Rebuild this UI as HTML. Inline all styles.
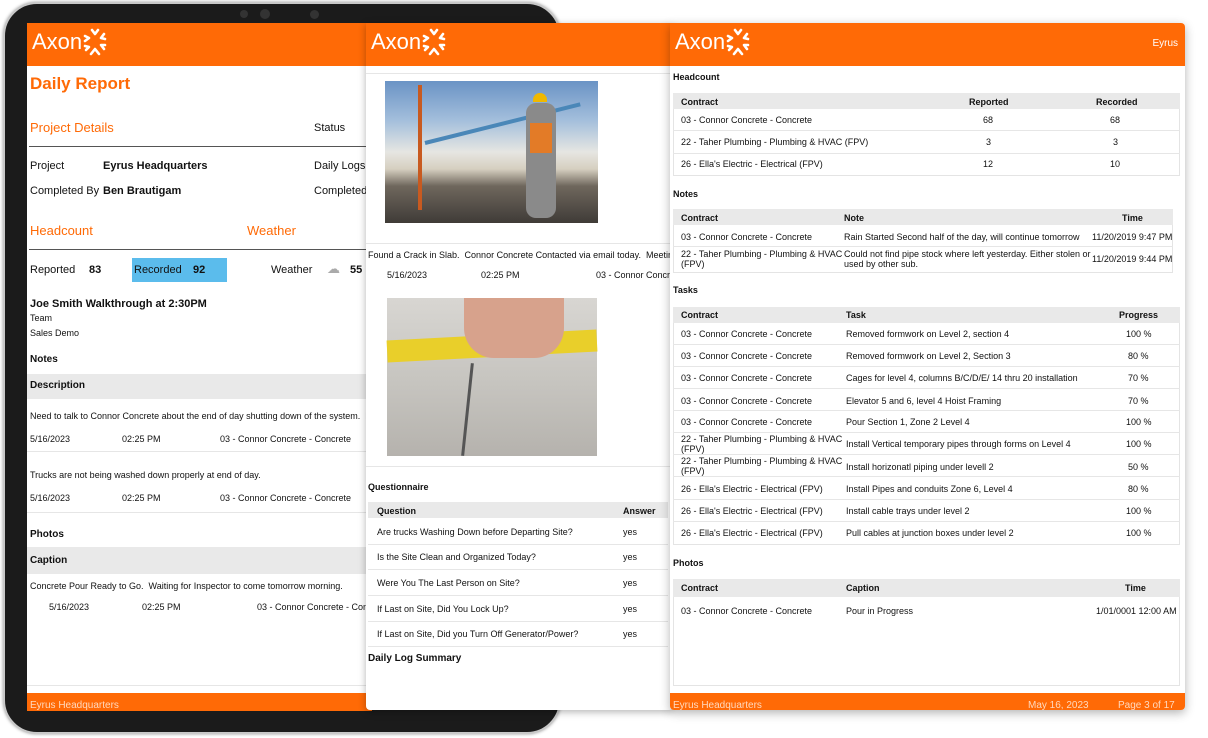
<!DOCTYPE html>
<html><head><meta charset="utf-8"><style>
*{margin:0;padding:0;box-sizing:border-box}
body{width:1208px;height:738px;background:#fff;position:relative;overflow:hidden;font-family:"Liberation Sans",Arial,sans-serif;color:#111}
.a{position:absolute;white-space:nowrap}
.pg{position:absolute;background:#fff;overflow:hidden}
.hd{position:absolute;left:0;right:0;top:0;height:43px;background:#ff6a06}
.logo{position:absolute;top:6px;color:#fff;font-size:22px}
.or{color:#ff6a06}
.s9{font-size:9px}.s10{font-size:10px}.s11{font-size:11px}
.b{font-weight:bold}
.gr{position:absolute;background:#e9e9e9}
.ln{position:absolute;height:1px;background:#e6e6e6}
</style></head><body>

<div style="position:absolute;left:3px;top:2px;width:558px;height:732px;background:#1b1b1b;border-radius:34px;border:2px solid #c8c8c8;box-shadow:0 0 3px #999"></div>
<div class="a" style="left:240px;top:10px;width:8px;height:8px;border-radius:50%;background:#333"></div>
<div class="a" style="left:260px;top:9px;width:10px;height:10px;border-radius:50%;background:#333"></div>
<div class="a" style="left:310px;top:10px;width:9px;height:9px;border-radius:50%;background:#333"></div>

<svg width="0" height="0" style="position:absolute"><defs><g id="burst" stroke="#fff" stroke-width="2.6" stroke-linecap="round" stroke-linejoin="round" fill="none">
<path d="M11 2 L14 6 L17 2"/><path d="M23 6 L20 10 L24 11"/><path d="M4 8 L8 10 L4 13"/><path d="M24 17 L20 17 L23 21"/><path d="M10 26 L14 21 L18 26"/><path d="M5 22 L8 19 L4 18"/></g></defs></svg>

<div class="pg" style="left:27px;top:23px;width:345px;height:688px">
 <div class="hd"><span class="logo" style="left:5px">Axon</span><svg class="a" style="left:54px;top:5px" width="28" height="28"><use href="#burst"/></svg></div>
 <div class="a or b" style="left:3px;top:51px;font-size:17px">Daily Report</div>
 <div class="a or" style="left:3px;top:97px;font-size:13px">Project Details</div>
 <div class="a s11" style="left:287px;top:99px">Status</div>
 <div class="a" style="left:2px;top:123px;width:343px;height:1px;background:#555"></div>
 <div class="a s11" style="left:3px;top:137px">Project</div>
 <div class="a s11 b" style="left:76px;top:137px">Eyrus Headquarters</div>
 <div class="a s11" style="left:287px;top:137px">Daily Logs</div>
 <div class="a s11" style="left:3px;top:162px">Completed By</div>
 <div class="a s11 b" style="left:76px;top:162px">Ben Brautigam</div>
 <div class="a s11" style="left:287px;top:162px">Completed</div>
 <div class="a or" style="left:3px;top:200px;font-size:13px">Headcount</div>
 <div class="a or" style="left:220px;top:200px;font-size:13px">Weather</div>
 <div class="a" style="left:2px;top:226px;width:343px;height:1px;background:#555"></div>
 <div class="a s11" style="left:3px;top:241px">Reported</div>
 <div class="a s11 b" style="left:62px;top:241px">83</div>
 <div class="a" style="left:105px;top:235px;width:95px;height:24px;background:#5bbcec"></div>
 <div class="a s11" style="left:107px;top:241px">Recorded</div>
 <div class="a s11 b" style="left:166px;top:241px">92</div>
 <div class="a s11" style="left:244px;top:241px">Weather</div>
 <div class="a" style="left:300px;top:238px;font-size:13px;color:#aaa">☁</div>
 <div class="a s11 b" style="left:323px;top:241px">55 ·</div>
 <div class="a s11 b" style="left:3px;top:275px">Joe Smith Walkthrough at 2:30PM</div>
 <div class="a s9" style="left:3px;top:290px">Team</div>
 <div class="a s9" style="left:3px;top:305px">Sales Demo</div>
 <div class="a s10 b" style="left:3px;top:331px">Notes</div>
 <div class="gr" style="left:0;top:351px;width:345px;height:25px"></div>
 <div class="a s10 b" style="left:3px;top:357px">Description</div>
 <div class="a s9" style="left:3px;top:388px">Need to talk to Connor Concrete about the end of day shutting down of the system.&nbsp; Hard</div>
 <div class="a s9" style="left:3px;top:411px">5/16/2023</div><div class="a s9" style="left:95px;top:411px">02:25 PM</div><div class="a s9" style="left:193px;top:411px">03 - Connor Concrete - Concrete</div>
 <div class="ln" style="left:0;top:428px;width:345px"></div>
 <div class="a s9" style="left:3px;top:447px">Trucks are not being washed down properly at end of day.</div>
 <div class="a s9" style="left:3px;top:470px">5/16/2023</div><div class="a s9" style="left:95px;top:470px">02:25 PM</div><div class="a s9" style="left:193px;top:470px">03 - Connor Concrete - Concrete</div>
 <div class="ln" style="left:0;top:489px;width:345px"></div>
 <div class="a s10 b" style="left:3px;top:506px">Photos</div>
 <div class="gr" style="left:0;top:524px;width:345px;height:27px"></div>
 <div class="a s10 b" style="left:3px;top:532px">Caption</div>
 <div class="a s9" style="left:3px;top:558px">Concrete Pour Ready to Go.&nbsp; Waiting for Inspector to come tomorrow morning.</div>
 <div class="a s9" style="left:22px;top:579px">5/16/2023</div><div class="a s9" style="left:115px;top:579px">02:25 PM</div><div class="a s9" style="left:230px;top:579px">03 - Connor Concrete - Conc</div>
 <div class="ln" style="left:0;top:662px;width:345px"></div>
 <div class="a" style="left:0;top:670px;width:345px;height:18px;background:#ff6a06"></div>
 <div class="a s10" style="left:3px;top:677px;color:#ffd9bf">Eyrus Headquarters</div>
</div>

<div class="pg" style="left:366px;top:23px;width:307px;height:687px;box-shadow:0 2px 8px rgba(0,0,0,.3);border-radius:0 0 4px 4px">
 <div class="hd"><span class="logo" style="left:5px">Axon</span><svg class="a" style="left:54px;top:5px" width="28" height="28"><use href="#burst"/></svg></div>
 <div class="ln" style="left:0;top:50px;width:307px"></div>
 <div class="a" style="left:19px;top:58px;width:213px;height:142px;overflow:hidden;background:linear-gradient(180deg,#6a93c5 0%,#a4bfdc 28%,#e6e6e2 50%,#d6cfc0 62%,#6f675d 74%,#3f3b37 100%)">
  <div class="a" style="left:40px;top:60px;width:160px;height:4px;background:#4a87b8;transform:rotate(-14deg);transform-origin:left"></div>
  <div class="a" style="left:141px;top:22px;width:30px;height:115px;background:#8a8a8a;border-radius:10px"></div>
  <div class="a" style="left:145px;top:42px;width:22px;height:30px;background:#e37b27"></div>
  <div class="a" style="left:148px;top:12px;width:14px;height:9px;background:#f0b800;border-radius:7px 7px 0 0"></div>
  <div class="a" style="left:33px;top:4px;width:4px;height:125px;background:#c85a20"></div>
 </div>
 <div class="ln" style="left:0;top:220px;width:307px"></div>
 <div class="a s9" style="left:2px;top:227px">Found a Crack in Slab.&nbsp; Connor Concrete Contacted via email today.&nbsp; Meeting s</div>
 <div class="a s9" style="left:21px;top:247px">5/16/2023</div><div class="a s9" style="left:115px;top:247px">02:25 PM</div><div class="a s9" style="left:230px;top:247px">03 - Connor Concre</div>
 <div class="a" style="left:21px;top:275px;width:210px;height:158px;background:linear-gradient(180deg,#d8d6d2,#c4c2bd 60%,#b5b2ad)"></div>
 <div class="a" style="left:21px;top:312px;width:210px;height:22px;background:#e9cf2a;transform:rotate(-3deg)"></div>
 <div class="a" style="left:98px;top:275px;width:100px;height:60px;background:#d7a28c;border-radius:0 0 30px 30px"></div>
 <div class="a" style="left:100px;top:340px;width:3px;height:93px;background:#555;transform:rotate(6deg)"></div>
 <div class="ln" style="left:0;top:443px;width:307px"></div>
 <div class="a s9 b" style="left:2px;top:459px">Questionnaire</div>
 <div class="gr" style="left:2px;top:479px;width:300px;height:16px"></div>
 <div class="a s9 b" style="left:11px;top:483px">Question</div><div class="a s9 b" style="left:257px;top:483px">Answer</div>
 <div class="a s9" style="left:11px;top:504px">Are trucks Washing Down before Departing Site?</div><div class="a s9" style="left:257px;top:504px">yes</div>
 <div class="ln" style="left:2px;top:521px;width:300px"></div>
 <div class="a s9" style="left:11px;top:529px">Is the Site Clean and Organized Today?</div><div class="a s9" style="left:257px;top:529px">yes</div>
 <div class="ln" style="left:2px;top:546px;width:300px"></div>
 <div class="a s9" style="left:11px;top:555px">Were You The Last Person on Site?</div><div class="a s9" style="left:257px;top:555px">yes</div>
 <div class="ln" style="left:2px;top:572px;width:300px"></div>
 <div class="a s9" style="left:11px;top:581px">If Last on Site, Did You Lock Up?</div><div class="a s9" style="left:257px;top:581px">yes</div>
 <div class="ln" style="left:2px;top:598px;width:300px"></div>
 <div class="a s9" style="left:11px;top:606px">If Last on Site, Did you Turn Off Generator/Power?</div><div class="a s9" style="left:257px;top:606px">yes</div>
 <div class="ln" style="left:2px;top:623px;width:300px"></div>
 <div class="a s10 b" style="left:2px;top:630px">Daily Log Summary</div>
</div>

<div class="pg" style="left:670px;top:23px;width:515px;height:687px;box-shadow:0 3px 10px rgba(0,0,0,.3);border-radius:0 4px 4px 4px">
 <div class="hd"><span class="logo" style="left:5px">Axon</span><svg class="a" style="left:54px;top:5px" width="28" height="28"><use href="#burst"/></svg><span class="a s10" style="right:7px;top:15px;color:#fff">Eyrus</span></div>
 <div class="a s9 b" style="left:3px;top:49px">Headcount</div>
 <div class="a" style="left:3px;top:70px;width:507px;height:83px;border:1px solid #e4e4e4"></div>
 <div class="gr" style="left:3px;top:70px;width:507px;height:16px"></div>
 <div class="a s9 b" style="left:11px;top:74px">Contract</div><div class="a s9 b" style="left:299px;top:74px">Reported</div><div class="a s9 b" style="left:426px;top:74px">Recorded</div>
 <div class="a s9" style="left:11px;top:92px">03 - Connor Concrete - Concrete</div><div class="a s9" style="left:313px;top:92px">68</div><div class="a s9" style="left:440px;top:92px">68</div>
 <div class="ln" style="left:3px;top:107px;width:507px"></div>
 <div class="a s9" style="left:11px;top:114px">22 - Taher Plumbing - Plumbing &amp; HVAC (FPV)</div><div class="a s9" style="left:316px;top:114px">3</div><div class="a s9" style="left:443px;top:114px">3</div>
 <div class="ln" style="left:3px;top:130px;width:507px"></div>
 <div class="a s9" style="left:11px;top:136px">26 - Ella's Electric - Electrical (FPV)</div><div class="a s9" style="left:313px;top:136px">12</div><div class="a s9" style="left:440px;top:136px">10</div>
 <div class="a s9 b" style="left:3px;top:166px">Notes</div>
 <div class="a" style="left:3px;top:186px;width:500px;height:64px;border:1px solid #e4e4e4"></div>
 <div class="gr" style="left:3px;top:186px;width:500px;height:16px"></div>
 <div class="a s9 b" style="left:11px;top:190px">Contract</div><div class="a s9 b" style="left:174px;top:190px">Note</div><div class="a s9 b" style="left:452px;top:190px">Time</div>
 <div class="a s9" style="left:11px;top:209px">03 - Connor Concrete - Concrete</div><div class="a s9" style="left:174px;top:209px">Rain Started Second half of the day, will continue tomorrow</div><div class="a s9" style="left:422px;top:209px">11/20/2019 9:47 PM</div>
 <div class="ln" style="left:3px;top:223px;width:500px"></div>
 <div class="a s9" style="left:11px;top:226px;line-height:10px">22 - Taher Plumbing - Plumbing &amp; HVAC<br>(FPV)</div><div class="a s9" style="left:174px;top:226px;line-height:10px">Could not find pipe stock where left yesterday. Either stolen or<br>used by other sub.</div><div class="a s9" style="left:422px;top:231px">11/20/2019 9:44 PM</div>
 <div class="a s9 b" style="left:3px;top:262px">Tasks</div>
 <div class="a" style="left:3px;top:284px;width:507px;height:238px;border:1px solid #e4e4e4"></div>
 <div class="gr" style="left:3px;top:284px;width:507px;height:16px"></div>
 <div class="a s9 b" style="left:11px;top:287px">Contract</div><div class="a s9 b" style="left:176px;top:287px">Task</div><div class="a s9 b" style="left:449px;top:287px">Progress</div>
 <div class="a s9" style="left:11px;top:306px">03 - Connor Concrete - Concrete</div><div class="a s9" style="left:176px;top:306px">Removed formwork on Level 2, section 4</div><div class="a s9" style="left:456px;top:306px">100 %</div>
 <div class="ln" style="left:3px;top:321px;width:507px"></div>
 <div class="a s9" style="left:11px;top:328px">03 - Connor Concrete - Concrete</div><div class="a s9" style="left:176px;top:328px">Removed formwork on Level 2, Section 3</div><div class="a s9" style="left:458px;top:328px">80 %</div>
 <div class="ln" style="left:3px;top:343px;width:507px"></div>
 <div class="a s9" style="left:11px;top:350px">03 - Connor Concrete - Concrete</div><div class="a s9" style="left:176px;top:350px">Cages for level 4, columns B/C/D/E/ 14 thru 20 installation</div><div class="a s9" style="left:458px;top:350px">70 %</div>
 <div class="ln" style="left:3px;top:365px;width:507px"></div>
 <div class="a s9" style="left:11px;top:373px">03 - Connor Concrete - Concrete</div><div class="a s9" style="left:176px;top:373px">Elevator 5 and 6, level 4 Hoist Framing</div><div class="a s9" style="left:458px;top:373px">70 %</div>
 <div class="ln" style="left:3px;top:387px;width:507px"></div>
 <div class="a s9" style="left:11px;top:394px">03 - Connor Concrete - Concrete</div><div class="a s9" style="left:176px;top:394px">Pour Section 1, Zone 2 Level 4</div><div class="a s9" style="left:456px;top:394px">100 %</div>
 <div class="ln" style="left:3px;top:409px;width:507px"></div>
 <div class="a s9" style="left:11px;top:411px;line-height:10px">22 - Taher Plumbing - Plumbing &amp; HVAC<br>(FPV)</div><div class="a s9" style="left:176px;top:416px">Install Vertical temporary pipes through forms on Level 4</div><div class="a s9" style="left:456px;top:416px">100 %</div>
 <div class="ln" style="left:3px;top:431px;width:507px"></div>
 <div class="a s9" style="left:11px;top:433px;line-height:10px">22 - Taher Plumbing - Plumbing &amp; HVAC<br>(FPV)</div><div class="a s9" style="left:176px;top:439px">Install horizonatl piping under levell 2</div><div class="a s9" style="left:458px;top:439px">50 %</div>
 <div class="ln" style="left:3px;top:453px;width:507px"></div>
 <div class="a s9" style="left:11px;top:461px">26 - Ella's Electric - Electrical (FPV)</div><div class="a s9" style="left:176px;top:461px">Install Pipes and conduits Zone 6, Level 4</div><div class="a s9" style="left:458px;top:461px">80 %</div>
 <div class="ln" style="left:3px;top:476px;width:507px"></div>
 <div class="a s9" style="left:11px;top:483px">26 - Ella's Electric - Electrical (FPV)</div><div class="a s9" style="left:176px;top:483px">Install cable trays under level 2</div><div class="a s9" style="left:456px;top:483px">100 %</div>
 <div class="ln" style="left:3px;top:498px;width:507px"></div>
 <div class="a s9" style="left:11px;top:505px">26 - Ella's Electric - Electrical (FPV)</div><div class="a s9" style="left:176px;top:505px">Pull cables at junction boxes under level 2</div><div class="a s9" style="left:456px;top:505px">100 %</div>
 <div class="a s9 b" style="left:3px;top:535px">Photos</div>
 <div class="a" style="left:3px;top:556px;width:507px;height:107px;border:1px solid #e4e4e4"></div>
 <div class="gr" style="left:3px;top:556px;width:507px;height:18px"></div>
 <div class="a s9 b" style="left:11px;top:560px">Contract</div><div class="a s9 b" style="left:176px;top:560px">Caption</div><div class="a s9 b" style="left:455px;top:560px">Time</div>
 <div class="a s9" style="left:11px;top:583px">03 - Connor Concrete - Concrete</div><div class="a s9" style="left:176px;top:583px">Pour in Progress</div><div class="a s9" style="left:426px;top:583px">1/01/0001 12:00 AM</div>
 <div class="a" style="left:0;top:670px;width:515px;height:17px;background:#ff6a06"></div>
 <div class="a s10" style="left:3px;top:677px;color:#ffd9bf">Eyrus Headquarters</div>
 <div class="a s10" style="left:358px;top:677px;color:#ffd9bf">May 16, 2023</div>
 <div class="a s10" style="left:448px;top:677px;color:#ffd9bf">Page 3 of 17</div>
</div>
</body></html>
